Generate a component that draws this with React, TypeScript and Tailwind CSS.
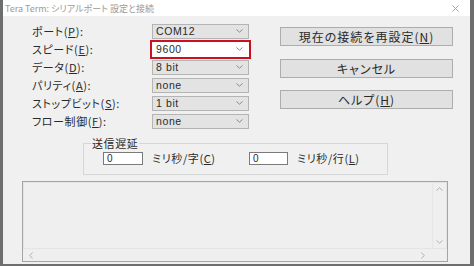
import React from "react";

const jp = "[font-family:'Noto_Sans_CJK_JP','Noto_Sans',sans-serif] [font-feature-settings:'palt']";

function Chevron() {
  return (
    <svg width="7" height="4" viewBox="0 0 7 4" className="shrink-0">
      <path d="M0.5 0.5 L3.5 3.2 L6.5 0.5" fill="none" stroke="#8a8a8a" strokeWidth="1" />
    </svg>
  );
}

function Combo({ value, highlight }: { value: string; highlight?: boolean }) {
  return (
    <div
      className={
        highlight
          ? "w-[97px] h-[15px] flex items-center justify-between pl-[3px] pr-[5px] bg-white outline-2 outline-[#cc1020] border border-white"
          : "w-[97px] h-[15px] flex items-center justify-between pl-[3px] pr-[5px] bg-[#e3e3e3] border border-[#b4b4b4]"
      }
    >
      <span className="[font-family:'Liberation_Sans',Arial,sans-serif] text-[10.5px] tracking-[0.6px] text-[#2a2a2a] leading-none">
        {value}
      </span>
      <Chevron />
    </div>
  );
}

function Row({ label, key2, value, highlight }: { label: string; key2: string; value: string; highlight?: boolean }) {
  return (
    <div className="h-[18px] flex items-center">
      <div className={`w-[120px] text-[11px] tracking-[0.6px] text-[#2a2a2a] leading-none ${jp}`}>
        {label}(<span className="underline">{key2}</span>):
      </div>
      <Combo value={value} highlight={highlight} />
    </div>
  );
}

function Btn({ children, className }: { children: React.ReactNode; className?: string }) {
  return (
    <div
      className={`w-[173px] h-[19px] flex items-center justify-center bg-[#e1e1e1] border border-[#adadad] text-[12px] tracking-[1px] text-[#2a2a2a] leading-none ${jp} ${className ?? ""}`}
    >
      {children}
    </div>
  );
}

export default function App() {
  return (
    <div className="w-[474px] h-[266px] flex flex-col bg-[#f0f0f0] border-l-[3px] border-r-[4px] border-b-[2px] border-[#6e6e6e] overflow-hidden">
      <div className="h-[16px] shrink-0 bg-white flex items-center justify-between pl-[2px] pr-[11px]">
        <span className={`text-[9px] text-[#9a9a9a] leading-none ${jp}`}>Tera Term: シリアルポート 設定と接続</span>
        <svg width="7" height="7" viewBox="0 0 7 7">
          <path d="M0.5 0.5 L6.5 6.5 M6.5 0.5 L0.5 6.5" stroke="#a8a8a8" strokeWidth="1" />
        </svg>
      </div>

      <div className="flex pl-[29px] pt-[6px]">
        <div className="flex flex-col">
          <Row label="ポート" key2="P" value="COM12" />
          <Row label="スピード" key2="E" value="9600" highlight />
          <Row label="データ" key2="D" value="8 bit" />
          <Row label="パリティ" key2="A" value="none" />
          <Row label="ストップビット" key2="S" value="1 bit" />
          <Row label="フロー制御" key2="F" value="none" />
        </div>
        <div className="flex flex-col ml-[31px]">
          <Btn className="mt-[5px]">
            現在の接続を再設定(<span className="underline">N</span>)
          </Btn>
          <Btn className="mt-[13px]">キャンセル</Btn>
          <Btn className="mt-[12px]">
            ヘルプ(<span className="underline">H</span>)
          </Btn>
        </div>
      </div>

      <fieldset className="ml-[80px] mt-[6px] w-[305px] border border-[#d6d6d6] pl-[19px] pt-[2px] pb-[9px]">
        <legend className={`-ml-[12px] px-[1px] text-[11px] tracking-[0.6px] leading-[14px] text-[#2a2a2a] ${jp}`}>送信遅延</legend>
        <div className="flex items-center">
          <div className="w-[40px] h-[13px] bg-white border border-[#7a7a7a] flex items-center pl-[3px]">
            <span className="[font-family:'Liberation_Sans',Arial,sans-serif] text-[10px] leading-none text-[#2a2a2a]">0</span>
          </div>
          <span className={`ml-[9px] w-[97px] text-[11px] tracking-[0.6px] leading-none text-[#2a2a2a] ${jp}`}>
            ミリ秒/字(<span className="underline">C</span>)
          </span>
          <div className="w-[39px] h-[13px] bg-white border border-[#7a7a7a] flex items-center pl-[3px]">
            <span className="[font-family:'Liberation_Sans',Arial,sans-serif] text-[10px] leading-none text-[#2a2a2a]">0</span>
          </div>
          <span className={`ml-[9px] text-[11px] tracking-[0.6px] leading-none text-[#2a2a2a] ${jp}`}>
            ミリ秒/行(<span className="underline">L</span>)
          </span>
        </div>
      </fieldset>

      <div className="ml-[19px] mt-[6px] w-[426px] h-[81px] border border-[#a4a4a4] flex flex-col bg-[#efefef]">
        <div className="flex-1 flex border border-[#e4e4e4]">
          <div className="flex-1" />
          <div className="w-[14px] border-l border-[#e6e6e6] flex flex-col items-center justify-between pt-[4px] pb-[4px]">
            <svg width="7" height="4" viewBox="0 0 7 4">
              <path d="M0.5 3.5 L3.5 0.8 L6.5 3.5" fill="none" stroke="#b0b0b0" strokeWidth="1" />
            </svg>
            <svg width="7" height="4" viewBox="0 0 7 4">
              <path d="M0.5 0.5 L3.5 3.2 L6.5 0.5" fill="none" stroke="#b0b0b0" strokeWidth="1" />
            </svg>
          </div>
        </div>
        <div className="h-[12px] flex items-center justify-between pl-[6px] pr-[22px]">
          <svg width="4" height="7" viewBox="0 0 4 7">
            <path d="M3.5 0.5 L0.8 3.5 L3.5 6.5" fill="none" stroke="#b0b0b0" strokeWidth="1" />
          </svg>
          <svg width="4" height="7" viewBox="0 0 4 7">
            <path d="M0.5 0.5 L3.2 3.5 L0.5 6.5" fill="none" stroke="#b0b0b0" strokeWidth="1" />
          </svg>
        </div>
      </div>
    </div>
  );
}
